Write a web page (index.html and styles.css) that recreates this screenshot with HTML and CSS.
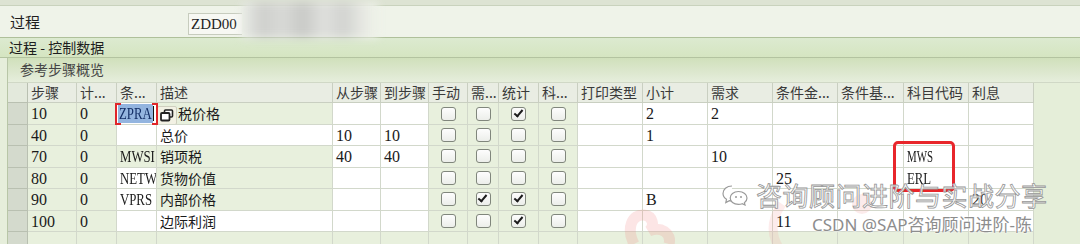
FILE: index.html
```html
<!DOCTYPE html>
<html lang="zh">
<head>
  <meta charset="UTF-8">
  <title>过程 - 控制数据</title>
  <link rel="stylesheet" href="styles.css">
</head>
<body>
<div class="screen">
  <div class="topband"></div>

  <div class="proc-row">
    <span class="proc-label">过程</span>
    <span class="proc-field">ZDD00</span>
  </div>

  <div class="section-title">过程 - 控制数据</div>

  <div class="panel">
    <div class="panel-title">参考步骤概览</div>

    <div class="row head">
      <div class="c sel"></div>
      <div class="c">步骤</div>
      <div class="c">计...</div>
      <div class="c">条...</div>
      <div class="c">描述</div>
      <div class="c">从步骤</div>
      <div class="c">到步骤</div>
      <div class="c">手动</div>
      <div class="c">需...</div>
      <div class="c">统计</div>
      <div class="c">科...</div>
      <div class="c">打印类型</div>
      <div class="c">小计</div>
      <div class="c">需求</div>
      <div class="c">条件金...</div>
      <div class="c">条件基...</div>
      <div class="c">科目代码</div>
      <div class="c">利息</div>
    </div>

    <!-- 10 -->
    <div class="row">
      <div class="c sel"></div>
      <div class="c g num">10</div>
      <div class="c g num">0</div>
      <div class="c w num focus"><span class="hl"><span class="code">ZPRA</span></span><span class="caret"></span></div>
      <div class="c g"><span class="copy-btn"><svg width="14" height="13" viewBox="0 0 14 13"><rect x="4.5" y="1" width="8" height="7" rx="1" fill="#fff" stroke="#222" stroke-width="1.6"/><rect x="1" y="4" width="8.5" height="7.5" rx="1" fill="#fff" stroke="#222" stroke-width="1.8"/></svg></span>税价格</div>
      <div class="c w"></div>
      <div class="c w"></div>
      <div class="c g ck"><span class="box"></span></div>
      <div class="c g ck"><span class="box"></span></div>
      <div class="c g ck"><span class="box on"></span></div>
      <div class="c g ck"><span class="box"></span></div>
      <div class="c w"></div>
      <div class="c w num">2</div>
      <div class="c w num">2</div>
      <div class="c w"></div>
      <div class="c w"></div>
      <div class="c w"></div>
      <div class="c w"></div>
    </div>

    <!-- 40 -->
    <div class="row">
      <div class="c sel"></div>
      <div class="c g num">40</div>
      <div class="c g num">0</div>
      <div class="c w"></div>
      <div class="c w">总价</div>
      <div class="c w num">10</div>
      <div class="c w num">10</div>
      <div class="c g ck"><span class="box"></span></div>
      <div class="c g ck"><span class="box"></span></div>
      <div class="c g ck"><span class="box"></span></div>
      <div class="c g ck"><span class="box"></span></div>
      <div class="c w"></div>
      <div class="c w num">1</div>
      <div class="c w"></div>
      <div class="c w"></div>
      <div class="c w"></div>
      <div class="c w"></div>
      <div class="c w"></div>
    </div>

    <!-- 70 -->
    <div class="row">
      <div class="c sel"></div>
      <div class="c g num">70</div>
      <div class="c g num">0</div>
      <div class="c g num"><span class="code">MWSI</span></div>
      <div class="c g">销项税</div>
      <div class="c w num">40</div>
      <div class="c w num">40</div>
      <div class="c g ck"><span class="box"></span></div>
      <div class="c g ck"><span class="box"></span></div>
      <div class="c g ck"><span class="box"></span></div>
      <div class="c g ck"><span class="box"></span></div>
      <div class="c w"></div>
      <div class="c w"></div>
      <div class="c w num">10</div>
      <div class="c w"></div>
      <div class="c w"></div>
      <div class="c w num"><span class="code narrow">MWS</span></div>
      <div class="c w"></div>
    </div>

    <!-- 80 -->
    <div class="row">
      <div class="c sel"></div>
      <div class="c g num">80</div>
      <div class="c g num">0</div>
      <div class="c w num"><span class="code">NETW</span></div>
      <div class="c g">货物价值</div>
      <div class="c w"></div>
      <div class="c w"></div>
      <div class="c g ck"><span class="box"></span></div>
      <div class="c g ck"><span class="box"></span></div>
      <div class="c g ck"><span class="box"></span></div>
      <div class="c g ck"><span class="box"></span></div>
      <div class="c w"></div>
      <div class="c w"></div>
      <div class="c w"></div>
      <div class="c w num">25</div>
      <div class="c w"></div>
      <div class="c w num"><span class="code">ERL</span></div>
      <div class="c w"></div>
    </div>

    <!-- 90 -->
    <div class="row">
      <div class="c sel"></div>
      <div class="c g num">90</div>
      <div class="c g num">0</div>
      <div class="c w num"><span class="code">VPRS</span></div>
      <div class="c g">内部价格</div>
      <div class="c w"></div>
      <div class="c w"></div>
      <div class="c g ck"><span class="box"></span></div>
      <div class="c g ck"><span class="box on"></span></div>
      <div class="c g ck"><span class="box on"></span></div>
      <div class="c g ck"><span class="box"></span></div>
      <div class="c w"></div>
      <div class="c w num">B</div>
      <div class="c w"></div>
      <div class="c w"></div>
      <div class="c w"></div>
      <div class="c w"></div>
      <div class="c w num">20</div>
    </div>

    <!-- 100 -->
    <div class="row">
      <div class="c sel"></div>
      <div class="c g num">100</div>
      <div class="c g num">0</div>
      <div class="c w"></div>
      <div class="c w">边际利润</div>
      <div class="c w"></div>
      <div class="c w"></div>
      <div class="c g ck"><span class="box"></span></div>
      <div class="c g ck"><span class="box"></span></div>
      <div class="c g ck"><span class="box on"></span></div>
      <div class="c g ck"><span class="box"></span></div>
      <div class="c w"></div>
      <div class="c w"></div>
      <div class="c w"></div>
      <div class="c w num">11</div>
      <div class="c w"></div>
      <div class="c w"></div>
      <div class="c w"></div>
    </div>

    <!-- empty -->
    <div class="row empty">
      <div class="c sel"></div>
      <div class="c"></div><div class="c"></div><div class="c"></div><div class="c"></div>
      <div class="c"></div><div class="c"></div><div class="c"></div><div class="c"></div>
      <div class="c"></div><div class="c"></div><div class="c"></div><div class="c"></div>
      <div class="c"></div><div class="c"></div><div class="c"></div><div class="c"></div>
      <div class="c"></div>
    </div>
  </div>

  <!-- overlays on the screenshot -->
  <div class="blurred"></div>
  <div class="red-mark"></div>
  <svg class="logo-ghost" width="300" height="60" viewBox="0 0 300 60">
    <path d="M34 58 C26 42 32 28 44 29 C53 30 55 40 49 45 C61 40 72 47 69 58" fill="none" stroke="#f08a8a" stroke-width="11" opacity="0.22"/>
    <path d="M182 18 C172 32 170 46 178 60" fill="none" stroke="#f4a0a0" stroke-width="9" opacity="0.2"/>
    <circle cx="262" cy="18" r="10" fill="#f3a3a3" opacity="0.22"/>
  </svg>
  <div class="wm">
    <svg class="wm-icon" width="26" height="22" viewBox="0 0 26 22">
      <path d="M10 2 C4.5 2 1 5.5 1 9.5 C1 12 2.5 14 4.5 15.3 L3.8 18.5 L7.4 16.6 C8.2 16.8 9.1 17 10 17" fill="#fff" stroke="#9a9a9a" stroke-width="1.2"/>
      <path d="M16.5 7.5 C21.5 7.5 25 10.5 25 14 C25 16 24 17.6 22.4 18.7 L23 21 L20.2 19.7 C19 20.1 17.8 20.3 16.5 20.3 C11.5 20.3 8.2 17.5 8.2 14 C8.2 10.5 11.5 7.5 16.5 7.5 Z" fill="#fff" stroke="#9a9a9a" stroke-width="1.2"/>
      <circle cx="14" cy="13" r="1" fill="#9a9a9a"/><circle cx="19" cy="13" r="1" fill="#9a9a9a"/>
    </svg>
    <span class="wm-text">咨询顾问进阶与实战分享</span>
  </div>
  <div class="wm-csdn">CSDN @SAP咨询顾问进阶-陈</div>
</div>
</body>
</html>
```

FILE: styles.css
```css
body {
  margin: 0;
  width: 1080px;
  height: 244px;
  overflow: hidden;
  background: #e6eedb;
  font-family: "Noto Sans CJK SC", "Noto Sans", sans-serif;
  font-size: 14px;
  color: #222;
}

.screen {
  position: relative;
  width: 1080px;
  height: 244px;
  overflow: hidden;
}

.topband {
  height: 5px;
  background: #dde3d3;
  border-bottom: 1px solid #c9d2bd;
}

.proc-row {
  height: 31px;
  display: flex;
  align-items: center;
  background: #eff3e9;
  border-bottom: 1px solid #afc09a;
}

.proc-label {
  margin-left: 10px;
  width: 178px;
  font-size: 15px;
  color: #1e1e1e;
}

.proc-field {
  height: 22px;
  width: 54px;
  margin-top: 4px;
  padding-left: 2px;
  box-sizing: border-box;
  background: #f7f8f3;
  border: 1px solid #c7ccbe;
  border-right: none;
  font-family: "Liberation Serif", serif;
  font-size: 15px;
  line-height: 20px;
  color: #1e1e1e;
  white-space: nowrap;
  overflow: hidden;
}

.section-title {
  height: 19px;
  line-height: 19px;
  padding-left: 9px;
  background: linear-gradient(#dcead0, #d5e5c1);
  border-bottom: 1px solid #b3c3a0;
  font-size: 14px;
  color: #1e1e1e;
}

.panel {
  margin-left: 7px;
  border-left: 1px solid #b8c6a7;
  background: #e5eed9;
}

.panel-title {
  height: 24px;
  line-height: 22px;
  padding-left: 12px;
  background: linear-gradient(#d0e0bb, #dfe9d2 70%, #e6eedc);
  border-bottom: 1px solid #d0d8c6;
  font-size: 14px;
  color: #444;
}

.row {
  display: grid;
  grid-template-columns: 20px 49px 40px 40px 176px 48px 48px 39px 31px 40px 39px 65px 65px 65px 65px 66px 65px 65px;
  height: 21.5px;
}

.row.head {
  height: 20px;
}

.c {
  box-sizing: border-box;
  border-right: 1px solid #d2d8cb;
  border-bottom: 1px solid #d2d8cb;
  padding-left: 3px;
  white-space: nowrap;
  overflow: hidden;
  line-height: 20px;
  color: #1a1a1a;
}

.head .c {
  background: #e9ede3;
  border-color: #c9cfc1;
  color: #3a3a3a;
  line-height: 19px;
}

.c.sel {
  background: #d4dacd;
  border-color: #b9c0b1;
}

.head .c.sel {
  background: #e3e9dc;
}

.c.g { background: #e8f0dd; }
.c.w { background: #fff; }
.empty .c { background: #e8f0dd; }
.empty .c.sel { background: #d4dacd; }

.num {
  font-family: "Liberation Serif", serif;
  font-size: 16px;
  line-height: 21px;
}

/* narrow latin codes, like the SAP GUI font */
.code {
  display: inline-block;
  transform: scaleX(0.8);
  transform-origin: left center;
  margin-right: -8px;
}

.code.narrow {
  transform: scaleX(0.68);
}

.ck {
  display: flex;
  align-items: center;
  justify-content: center;
  padding-left: 0;
}

.box {
  width: 15px;
  height: 14px;
  box-sizing: border-box;
  border: 1.5px solid #80867c;
  border-radius: 3px;
  background: linear-gradient(#fdfdfd, #eceeea);
  position: relative;
}

.box.on::after {
  content: "";
  position: absolute;
  left: 3.5px;
  top: 0px;
  width: 3px;
  height: 7px;
  border-right: 2.2px solid #1c1c1c;
  border-bottom: 2.2px solid #1c1c1c;
  transform: rotate(40deg);
}

/* ZPRA focus */
.focus {
  position: relative;
  overflow: visible;
  padding-left: 1px;
}

.focus::before,
.focus::after {
  content: "";
  position: absolute;
  top: 0;
  bottom: -1px;
  width: 4px;
  border: 2px solid #e0262a;
}

.focus::before {
  left: -2px;
  border-right: none;
}

.focus::after {
  right: -2px;
  border-left: none;
}

.hl {
  display: inline-block;
  width: 34px;
  background: #93b4df;
  color: #132e66;
  padding-left: 1px;
  line-height: 19px;
}

.caret {
  display: inline-block;
  width: 1px;
  height: 15px;
  background: #111;
  vertical-align: -2px;
}

.copy-btn {
  display: inline-flex;
  align-items: center;
  justify-content: center;
  width: 18px;
  height: 17px;
  margin-left: -3px;
  margin-right: 1px;
  vertical-align: -3px;
  background: #f2f1e4;
  border: 1px solid #cfcfbf;
  border-radius: 2px;
}

/* overlays */
.blurred {
  position: absolute;
  left: 242px;
  top: 2px;
  width: 136px;
  height: 36px;
  background: linear-gradient(90deg, #e9ebe6 0, #cfd0cd 15%, #d8d9d6 30%, #c9cac7 45%, #dfe0dd 60%, #d2d3d0 75%, #e8eae4 90%, #eff3e9 100%);
  filter: blur(4px);
}

.red-mark {
  position: absolute;
  left: 893px;
  top: 141px;
  width: 62px;
  height: 51px;
  box-sizing: border-box;
  border: 3px solid #e8262b;
  border-radius: 5px;
}

.logo-ghost {
  position: absolute;
  left: 600px;
  top: 186px;
}

.wm {
  position: absolute;
  left: 722px;
  top: 180px;
  display: flex;
  align-items: center;
  gap: 8px;
}

.wm-text {
  font-size: 26px;
  line-height: 30px;
  color: rgba(255, 255, 255, 0.9);
  -webkit-text-stroke: 0.8px #959595;
  letter-spacing: 0.5px;
}

.wm-csdn {
  position: absolute;
  left: 812px;
  top: 213px;
  font-family: "Noto Sans", "Noto Sans CJK SC", sans-serif;
  font-size: 17px;
  line-height: 24px;
  color: #8d8d8d;
  text-shadow: 0 0 2px #fff, 0 0 2px #fff;
}
```
